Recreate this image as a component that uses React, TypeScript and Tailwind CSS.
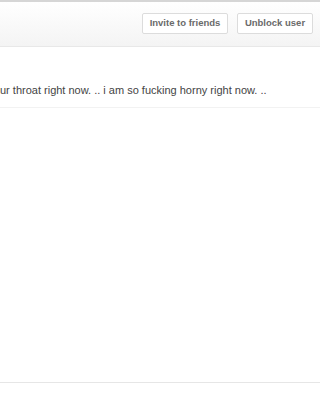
export default function App() {
  return (
    <div
      className="flex h-[400px] w-[320px] flex-col overflow-hidden bg-white text-[#333]"
      style={{ fontFamily: '"Liberation Sans", Arial, sans-serif' }}
    >
      {/* header bar with actions */}
      <div className="flex h-[47px] items-start justify-end gap-[9px] border-t-2 border-b border-t-[#d6d6d6] border-b-[#e8e8e8] bg-gradient-to-b from-white to-[#f4f4f4] pr-[7px] pt-[11px]">
        <button className="h-[21px] w-[86px] rounded-[2px] border border-[#dcdcdc] bg-white text-[9.5px] font-bold text-[#6a6a6a]">
          Invite to friends
        </button>
        <button className="h-[21px] w-[76px] rounded-[2px] border border-[#dcdcdc] bg-white text-[9.5px] font-bold text-[#6a6a6a]">
          Unblock user
        </button>
      </div>

      {/* message */}
      <div className="border-b border-[#f2f2f2] pb-[10px] pt-[36px]">
        <p className="whitespace-nowrap text-[11px] leading-[14px] text-[#444]">
          ur throat right now. .. i am so fucking horny right now. ..
        </p>
      </div>

      <div className="flex-1" />
      <div className="mb-[17px] border-b border-[#e6e6e6]" />
    </div>
  )
}
